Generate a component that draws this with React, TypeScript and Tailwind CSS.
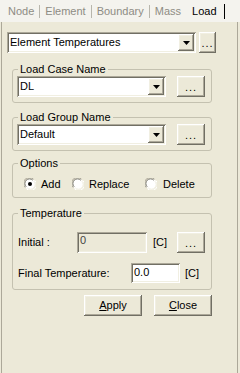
import React from "react";

const raised =
  "shadow-[inset_-1px_-1px_0_#716f64,inset_1px_1px_0_#ffffff,inset_-2px_-2px_0_#aca899,inset_2px_2px_0_#f1efe2]";
const sunken =
  "shadow-[inset_1px_1px_0_#aca899,inset_-1px_-1px_0_#ffffff,inset_2px_2px_0_#716f64,inset_-2px_-2px_0_#f1efe2]";

function Combo({ text, width }: { text: string; width: string }) {
  return (
    <div className={`${width} h-[21px] shrink-0 bg-white ${sunken} flex items-center p-[2px]`}>
      <span className="flex-1 pl-[1px] leading-[13px] text-black">{text}</span>
      <div className={`w-[16px] h-[17px] bg-[#ece9d8] ${raised} flex items-center justify-center`}>
        <svg width="7" height="4" viewBox="0 0 7 4">
          <path d="M0 0h7L3.5 4z" fill="#000" />
        </svg>
      </div>
    </div>
  );
}

function Dots({ w, h }: { w: string; h: string }) {
  return (
    <div className={`${w} ${h} shrink-0 bg-[#ece9d8] ${raised} flex items-center justify-center`}>
      <span className="leading-[11px] pt-[2px] tracking-[1px]">...</span>
    </div>
  );
}

function Radio({ checked }: { checked?: boolean }) {
  return (
    <svg width="12" height="12" viewBox="0 0 12 12" className="shrink-0">
      <circle cx="6" cy="6" r="5.5" fill="#ffffff" />
      <path d="M1.2 9.5A5.5 5.5 0 0 1 9.5 1.2" stroke="#aca899" strokeWidth="1" fill="none" />
      <path d="M2.2 8.8A4.5 4.5 0 0 1 8.8 2.2" stroke="#716f64" strokeWidth="1" fill="none" />
      <path d="M10.8 2.5A5.5 5.5 0 0 1 2.5 10.8" stroke="#ffffff" strokeWidth="1" fill="none" />
      <path d="M9.8 3.2A4.5 4.5 0 0 1 3.2 9.8" stroke="#f1efe2" strokeWidth="1" fill="none" />
      {checked && <circle cx="6" cy="6" r="2" fill="#000" />}
    </svg>
  );
}

function Group({
  title,
  className,
  children,
}: {
  title: string;
  className: string;
  children: React.ReactNode;
}) {
  return (
    <fieldset
      className={`ml-[10px] w-[200px] border border-[#c4c1b0] rounded-[3px] px-[4px] ${className}`}
    >
      <legend className="ml-[1px] px-[2px] leading-[13px] text-black">{title}</legend>
      {children}
    </fieldset>
  );
}

export default function App() {
  const tabs = ["Node", "Element", "Boundary"];
  return (
    <div
      className="w-[240px] h-[373px] bg-[#ece9d8] text-[11px] text-black flex flex-col overflow-hidden"
      style={{ fontFamily: '"Liberation Sans", Arial, sans-serif' }}
    >
      <div className="h-[22px] bg-[#f4f3ee] flex items-center pl-[8px]">
        {tabs.map((t) => (
          <React.Fragment key={t}>
            <span className="text-[#8e8c84] leading-[13px]">{t}</span>
            <span className="w-[1px] h-[13px] bg-[#b8b6ac] mx-[5px]" />
          </React.Fragment>
        ))}
        <span className="text-[#8e8c84] leading-[13px]">Mass</span>
        <span className="ml-[11px] leading-[13px] text-black">Load</span>
        <span className="w-[1px] h-[15px] bg-[#000] ml-[7px]" />
      </div>
      <div className="flex-1 ml-[1px] w-[237px] border-l border-r border-[#aca899] flex flex-col">
        <div className="mt-[10px] pl-[5px] flex gap-[3px]">
          <Combo text="Element Temperatures" width="w-[189px]" />
          <Dots w="w-[17px]" h="h-[21px]" />
        </div>

        <Group title="Load Case Name" className="mt-[10px] pb-[5px]">
          <div className="flex items-center">
            <Combo text="DL" width="w-[149px]" />
            <div className="ml-[11px]">
              <Dots w="w-[28px]" h="h-[21px]" />
            </div>
          </div>
        </Group>

        <Group title="Load Group Name" className="mt-[8px] pb-[5px]">
          <div className="flex items-center">
            <Combo text="Default" width="w-[149px]" />
            <div className="ml-[11px]">
              <Dots w="w-[28px]" h="h-[21px]" />
            </div>
          </div>
        </Group>

        <Group title="Options" className="mt-[6px] pt-[7px] pb-[6px]">
          <div className="flex items-center h-[14px] pl-[7px]">
            <div className="w-[48px] shrink-0 flex items-center gap-[5px]">
              <Radio checked />
              <span>Add</span>
            </div>
            <div className="w-[73px] shrink-0 flex items-center gap-[5px]">
              <Radio />
              <span>Replace</span>
            </div>
            <div className="shrink-0 flex items-center gap-[6px]">
              <Radio />
              <span>Delete</span>
            </div>
          </div>
        </Group>

        <Group title="Temperature" className="mt-[9px] pt-[12px] pb-[6px]">
          <div className="flex items-center h-[21px]">
            <span className="ml-[1px] w-[59px] shrink-0">Initial :</span>
            <div className={`w-[70px] h-[21px] shrink-0 bg-[#ece9d8] ${sunken} flex items-center px-[3px]`}>
              <span className="text-[#444] leading-[13px] -mt-[4px]">0</span>
            </div>
            <span className="ml-[6px] w-[24px] shrink-0">[C]</span>
            <Dots w="w-[28px]" h="h-[21px]" />
          </div>
          <div className="flex items-center h-[20px] mt-[10px]">
            <span className="ml-[1px] w-[113px] shrink-0">Final Temperature:</span>
            <div className={`w-[49px] h-[20px] shrink-0 bg-white ${sunken} flex items-center px-[3px]`}>
              <span className="leading-[13px] -mt-[2px]">0.0</span>
            </div>
            <span className="ml-[5px]">[C]</span>
          </div>
        </Group>

        <div className="mt-[5px] flex pl-[82px] gap-[12px]">
          <div className={`w-[58px] h-[21px] ${raised} bg-[#ece9d8] flex items-center justify-center`}>
            <span>
              <span className="underline">A</span>pply
            </span>
          </div>
          <div className={`w-[58px] h-[21px] ${raised} bg-[#ece9d8] flex items-center justify-center`}>
            <span>
              <span className="underline">C</span>lose
            </span>
          </div>
        </div>
      </div>
    </div>
  );
}
